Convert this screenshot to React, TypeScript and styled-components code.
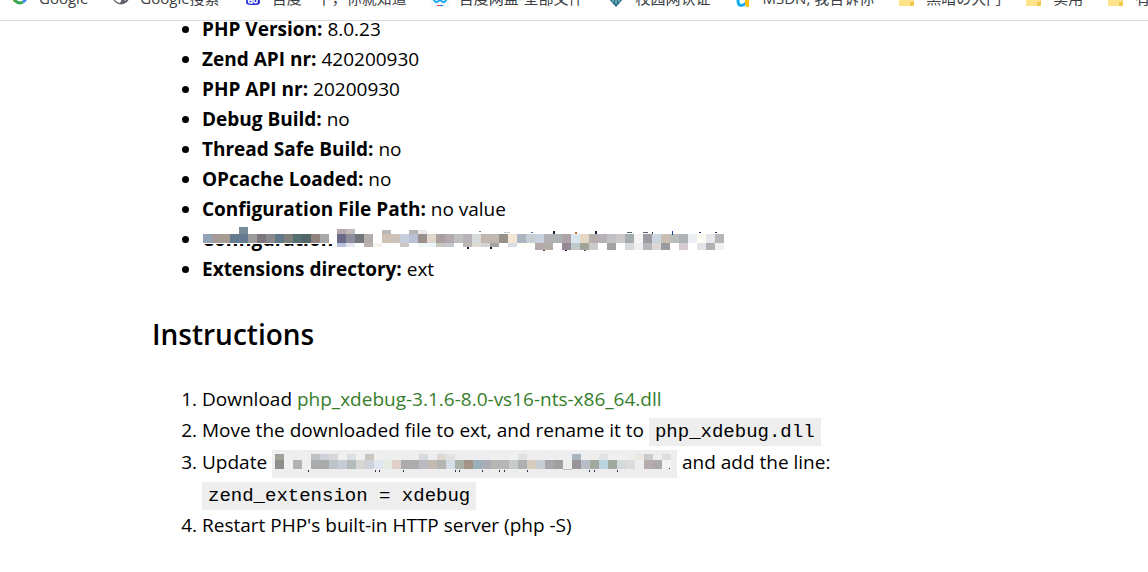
import React from "react";
import styled, { createGlobalStyle } from "styled-components";

const GlobalStyle = createGlobalStyle`
  * { box-sizing: border-box; }
  body {
    margin: 0;
    overflow: hidden;
    background: #fff;
    color: #000;
    font-family: "Open Sans", "Noto Sans CJK SC", sans-serif;
    font-size: 19px;
    line-height: 30px;
  }
`;

const BookmarkBar = styled.nav`
  position: relative;
  z-index: 1;
  display: flex;
  align-items: flex-end;
  gap: 24px;
  height: 21px;
  padding: 0 0 12px 11px;
  overflow: hidden;
  background: #fff;
  border-bottom: 1px solid #d9dbda;
`;

const Bookmark = styled.a`
  display: flex;
  flex: none;
  align-items: center;
  gap: 10px;
  color: #3c4043;
  font-size: 15px;
  line-height: 20px;
  white-space: nowrap;
  text-decoration: none;
`;

const BookmarkIcon = styled.svg`
  width: 18px;
  height: 18px;
`;

const Page = styled.main`
  max-width: 844px;
  margin: -7px auto 0;
`;

const Facts = styled.ul`
  margin: 0;
  padding-left: 50px;
`;

const Fact = styled.li`
  position: relative;
`;

const Name = styled.b`
  font-weight: 700;
`;

const Heading = styled.h2`
  margin: 30px 0;
  font-size: 28px;
  font-weight: 600;
  line-height: 40px;
`;

const Steps = styled.ol`
  margin: 0;
  padding-left: 50px;
`;

const Step = styled.li<{ $tall?: boolean }>`
  line-height: ${(p) => (p.$tall ? 32 : 30)}px;
`;

const Download = styled.a`
  color: #377e2c;
  text-decoration: none;
`;

const Code = styled.code`
  display: inline-block;
  padding: 0 6px;
  background: #eee;
  font-family: "Liberation Mono", monospace;
  font-size: 19px;
  line-height: 28px;
  vertical-align: middle;
`;

const HiddenPath = styled(Code)`
  padding: 0;
  width: 405px;
  height: 28px;
`;

const FactMosaic = styled.svg`
  position: absolute;
  left: 0;
  top: 0;
  width: 530px;
  height: 30px;
`;

const PathMosaic = styled.svg`
  display: block;
  width: 405px;
  height: 28px;
`;

type Tile = [x: number, y: number, h: number, color: string, w?: number];

/* Consecutive nine-pixel tiles; a dash leaves a gap. */
const strip = (x: number, y: number, h: number, colors: string): Tile[] =>
  colors
    .split(" ")
    .map((c, i): Tile => [x + i * 9, y, h, c === "-" ? "none" : "#" + c]);

const factTiles: Tile[] = [
  [0, 0, 20, "#fff", 134],
  ...strip(1, 10, 9, "92a4b6 a59a98 a89b91 647b90 647b90 9b9d9b 7b757d 888a8c 62798a 7e7f78 55706e 536469 8f827e a8a8a8"),
  [37, 3, 7, "#768c99"],
  ...strip(135, 10, 9, "6b6a88 8e8d9b 70767a b3aeab - cfc1b3 ccc2ba c8cddb b8c0d4 9a8f8d dfd7cd a9a19f b3a9ae bfbfc1 b7b2b7 d6dbdc c0b8b0 c0b8b0 97918c f5e7d8 acb6c0 c6ced6 c8d3df b0b0b5 acb2b3 ada3a8 d9e5ef e5d8c3 b6afac b6b2b8 c1c1c6 cbc8c7 a3adae f5f5f5 9c9ca3 cbd6e1 cabfb3 b9beba adb2b5 ecf0f5 fefcf2 e4e8ec b7b7b8"),
  ...strip(135, 19, 4, "b8c4df e3e6f0 - b9b2ae f5f3f2 - - cdc5c5 - eff7f7 eaf5fa c8c8bf c3c7d0 - bcb8b4 dedbd3 d2d2d3 a1a3a4 - d9dee3 fffdf8 fffdf8"),
  ...strip(333, 19, 7, "b5a9ab b2afa8 - 948996 c0c8c8 a0a598 cccacb - a2a2a2 - d7dadc eeeeee b5b7b8 ddd8d3 9a9b9f - d6ccd1 - e2e4e9 b1b0b3 f0f0f0"),
  ...strip(135, 5, 5, "b5aaaa c0bcb9"),
  ...strip(180, 6, 4, "b9b9b8 - - b5b5b6 ece9ee"),
  [265, 23, 2, "#12152e", 2],
  [288, 23, 2, "#12152e", 2],
  [277, 7, 1, "#6e8794", 2],
  [302, 8, 1, "#c5cac8", 6],
  [329, 8, 1, "#4f7196", 2],
  [351, 7, 3, "#14233b", 2],
  [373, 8, 2, "#b77135", 2],
  [393, 7, 3, "#10182f", 2],
  [425, 8, 1, "#59616c", 5],
  [441, 8, 1, "#59616c", 5],
  [450, 8, 2, "#29333d", 1],
  [470, 7, 4, "#143a9a", 1],
  [497, 8, 1, "#2b2f5e", 2],
  [513, 8, 1, "#2b2f5e", 2],
  [341, 26, 1, "#6b2a17", 2],
  [363, 26, 1, "#32142c", 2],
  [382, 26, 1, "#3a6454", 2],
];

const pathTiles: Tile[] = [
  ...strip(3, 4, 6, "a0a197 f0f0f0 - - bcc1c3 cdd2d9 d5d8d7 f0f0f0 dbe1e3 f0f0f0 cac5be f0f0f0 - - - - d7d9e0 - dfd7d2 e2e2e2 - - - - f0f0f0 - f0f0f0 dfe1e0 - - f0f0f0 - - a8b5c0 - - dfe3e2 f0f0f0 f0f0f0 - e9e7df c9cccb - dcdfde"),
  ...strip(3, 10, 9, "8e8e8d f0f0f0 b0b3b2 - a9abad a9abad bcc4c8 c6cbd6 b3bcbb d6d7d3 cdd3d8 dfe6f0 e6ece3 dfd0ca aeabac aeabad b9b9c2 c3bbb1 b4b4b3 d5dee8 a9b0a7 a29487 9bafba acacb6 b5b5b4 b6b6b6 c5cbc6 afafb3 d8ccbe c8cdd1 a6a6ab a0a09f - 9b939b b9bdc7 a2aa9f bad4e2 a1a99e d3dadc dcdcdc - b5adab aea9ac f3f5f5"),
  [291, 19, 1, "#bcbcbc"],
  ...[36, 103, 107, 131, 183, 187, 210, 227, 232, 255, 317, 322, 345].map(
    (x): Tile => [x, 20, 2, "#28324a", 1]
  ),
  [397, 18, 1, "#26364a", 1],
];

const Tiles = ({ tiles }: { tiles: Tile[] }) => (
  <g shapeRendering="crispEdges">
    {tiles.map(([x, y, h, fill, w = 9], i) => (
      <rect key={i} x={x} y={y} width={w} height={h} fill={fill} />
    ))}
  </g>
);

const Folder = () => (
  <>
    <path d="M1 3h6l2 2h7v12H1z" fill="#f3cd58" />
    <path d="M1 6h15v10a1 1 0 0 1-1 1H2a1 1 0 0 1-1-1z" fill="#ffe28a" />
    <path d="M12 13h3l1-2v5l-1 1h-3z" fill="#efc84f" />
  </>
);

const bookmarks: { label: string; icon: React.ReactNode }[] = [
  {
    label: "Google",
    icon: (
      <g fill="none" strokeWidth="3">
        <path d="M4 12A7 7 0 0 1 14 3" stroke="#ea4335" />
        <path d="M3 7a7 7 0 0 0 1 5" stroke="#fbbc05" />
        <path d="M3 9a6 6 0 0 0 9 4" stroke="#34a853" />
        <path d="M9 8h6a6 6 0 0 1-3 5" stroke="#4285f4" />
      </g>
    ),
  },
  {
    label: "Google搜索",
    icon: (
      <>
        <circle cx="9" cy="7" r="8.5" fill="#5f6368" />
        <path d="M2 7c3-1 6 0 6 2l2 1-2 4c-4-1-6-3-6-7zM10 8l3-1V4h2c1 4 0 6-2 8l-1-2h-2z" fill="#fff" />
      </>
    ),
  },
  {
    label: "百度一下，你就知道",
    icon: (
      <>
        <ellipse cx="6" cy="3" rx="2" ry="3" fill="#2932e1" />
        <ellipse cx="12" cy="3" rx="2" ry="3" fill="#2932e1" />
        <path d="M9 5c3 0 7 4 7 8 0 3-3 3-7 3s-7 0-7-3c0-4 4-8 7-8z" fill="#2932e1" />
        <path d="M8 8v6H6a1.500 1.500 0 0 1 0-3h2M10 10v3c0 1 3 1 3 0v-3" fill="none" stroke="#fff" strokeWidth="1.500" />
      </>
    ),
  },
  {
    label: "百度网盘-全部文件",
    icon: (
      <>
        <rect width="18" height="18" rx="3" fill="#f6f9fc" />
        <path d="M9 10c-3-5-7-2-6 1s4 3 6-1c2 4 5 4 6 1s-3-6-6-1z" fill="none" stroke="#12a9f5" strokeWidth="2" />
        <path d="M6 16.500h3" stroke="#e4405f" />
        <path d="M9 16.500h3" stroke="#2476e8" />
      </>
    ),
  },
  {
    label: "校园网认证",
    icon: (
      <>
        <path d="M1 3h16v6l-8 9-8-9z" fill="#1f6c87" />
        <path d="M3 10h12M6 10v3M12 10v3M9 11v4" stroke="#c9dde2" />
      </>
    ),
  },
  {
    label: "MSDN, 我告诉你",
    icon: (
      <>
        <path d="M4 2v10c0 6 5 5 8 2" fill="none" stroke="#12aef0" strokeWidth="3" />
        <path d="M13 2v12c0 2 1 3 2 3" fill="none" stroke="#ffc20e" strokeWidth="4" />
      </>
    ),
  },
  { label: "黑暗の大门", icon: <Folder /> },
  { label: "实用", icon: <Folder /> },
  { label: "有道", icon: <Folder /> },
];

const facts: [string, string][] = [
  ["PHP Version:", "8.0.23"],
  ["Zend API nr:", "420200930"],
  ["PHP API nr:", "20200930"],
  ["Debug Build:", "no"],
  ["Thread Safe Build:", "no"],
  ["OPcache Loaded:", "no"],
  ["Configuration File Path:", "no value"],
];

export default function App() {
  return (
    <>
      <GlobalStyle />
      <BookmarkBar>
        {bookmarks.map(({ label, icon }) => (
          <Bookmark key={label} href="#">
            <BookmarkIcon viewBox="0 0 18 18" aria-hidden="true">
              {icon}
            </BookmarkIcon>
            {label}
          </Bookmark>
        ))}
      </BookmarkBar>
      <Page>
        <Facts>
          {facts.map(([name, value]) => (
            <Fact key={name}>
              <Name>{name}</Name> {value}
            </Fact>
          ))}
          <Fact>
            <Name>Configuration</Name>
            <FactMosaic aria-hidden="true">
              <Tiles tiles={factTiles} />
            </FactMosaic>
          </Fact>
          <Fact>
            <Name>Extensions directory:</Name> ext
          </Fact>
        </Facts>
        <Heading>Instructions</Heading>
        <Steps>
          <Step>
            Download <Download href="#">php_xdebug-3.1.6-8.0-vs16-nts-x86_64.dll</Download>
          </Step>
          <Step $tall>
            Move the downloaded file to ext, and rename it to <Code>php_xdebug.dll</Code>
          </Step>
          <Step $tall>
            Update{" "}
            <HiddenPath>
              <PathMosaic aria-hidden="true">
                <Tiles tiles={pathTiles} />
              </PathMosaic>
            </HiddenPath>{" "}
            and add the line:
            <br />
            <Code>zend_extension = xdebug</Code>
          </Step>
          <Step>Restart PHP's built-in HTTP server (php -S)</Step>
        </Steps>
      </Page>
    </>
  );
}
